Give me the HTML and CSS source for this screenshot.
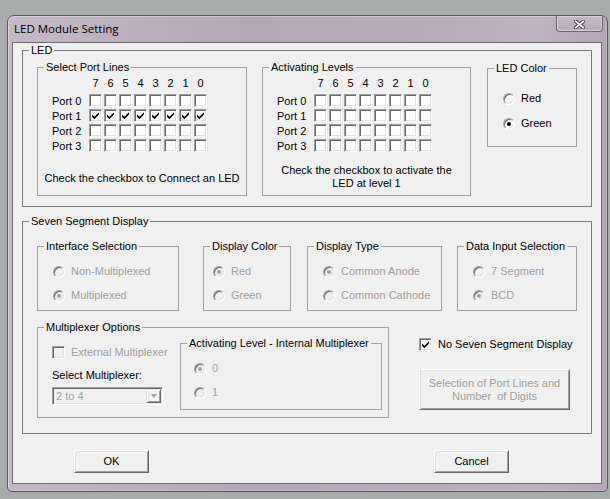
FILE: index.html
```html
<!DOCTYPE html>
<html>
<head>
<meta charset="utf-8">
<title>LED Module Setting</title>
<link rel="stylesheet" href="styles.css">
</head>
<body>
<svg class="defs" width="0" height="0" aria-hidden="true">
  <defs>
    <symbol id="tick" viewBox="0 0 7 7"><path d="M0 2.4 L2.4 4.8 L7 0.2 L7 2.6 L2.4 7.2 L0 4.8 Z"/></symbol>
  </defs>
</svg>
<div class="window">
  <div class="titlebar">
    <span class="title">LED Module Setting</span>
    <div class="close">
      <svg class="x" viewBox="0 0 11 9" width="11" height="9">
        <path class="x-out" d="M1.8 1.5 L9.2 7.5 M9.2 1.5 L1.8 7.5"/>
        <path class="x-in" d="M1.8 1.5 L9.2 7.5 M9.2 1.5 L1.8 7.5"/>
      </svg>
    </div>
  </div>
  <div class="client">
    <fieldset class="group outer led">
      <legend>LED</legend>
      <div class="led-row">
        <fieldset class="group ports">
          <legend>Select Port Lines</legend>
          <div class="matrix">
            <span></span><span class="bit">7</span><span class="bit">6</span><span class="bit">5</span><span class="bit">4</span><span class="bit">3</span><span class="bit">2</span><span class="bit">1</span><span class="bit">0</span>
            <span class="port">Port 0</span><i class="cb"></i><i class="cb"></i><i class="cb"></i><i class="cb"></i><i class="cb"></i><i class="cb"></i><i class="cb"></i><i class="cb"></i>
            <span class="port">Port 1</span><i class="cb"><svg class="tick"><use href="#tick"/></svg></i><i class="cb"><svg class="tick"><use href="#tick"/></svg></i><i class="cb"><svg class="tick"><use href="#tick"/></svg></i><i class="cb"><svg class="tick"><use href="#tick"/></svg></i><i class="cb"><svg class="tick"><use href="#tick"/></svg></i><i class="cb"><svg class="tick"><use href="#tick"/></svg></i><i class="cb"><svg class="tick"><use href="#tick"/></svg></i><i class="cb"><svg class="tick"><use href="#tick"/></svg></i>
            <span class="port">Port 2</span><i class="cb"></i><i class="cb"></i><i class="cb"></i><i class="cb"></i><i class="cb"></i><i class="cb"></i><i class="cb"></i><i class="cb"></i>
            <span class="port">Port 3</span><i class="cb"></i><i class="cb"></i><i class="cb"></i><i class="cb"></i><i class="cb"></i><i class="cb"></i><i class="cb"></i><i class="cb"></i>
          </div>
          <p class="note note-connect">Check the checkbox to Connect an LED</p>
        </fieldset>
        <fieldset class="group levels">
          <legend>Activating Levels</legend>
          <div class="matrix">
            <span></span><span class="bit">7</span><span class="bit">6</span><span class="bit">5</span><span class="bit">4</span><span class="bit">3</span><span class="bit">2</span><span class="bit">1</span><span class="bit">0</span>
            <span class="port">Port 0</span><i class="cb"></i><i class="cb"></i><i class="cb"></i><i class="cb"></i><i class="cb"></i><i class="cb"></i><i class="cb"></i><i class="cb"></i>
            <span class="port">Port 1</span><i class="cb"></i><i class="cb"></i><i class="cb"></i><i class="cb"></i><i class="cb"></i><i class="cb"></i><i class="cb"></i><i class="cb"></i>
            <span class="port">Port 2</span><i class="cb"></i><i class="cb"></i><i class="cb"></i><i class="cb"></i><i class="cb"></i><i class="cb"></i><i class="cb"></i><i class="cb"></i>
            <span class="port">Port 3</span><i class="cb"></i><i class="cb"></i><i class="cb"></i><i class="cb"></i><i class="cb"></i><i class="cb"></i><i class="cb"></i><i class="cb"></i>
          </div>
          <p class="note note-level">Check the checkbox to activate the<br>LED at level 1</p>
        </fieldset>
        <fieldset class="group ledcolor">
          <legend>LED Color</legend>
          <div class="opts opts-ledcolor">
            <div class="opt"><i class="rb"></i><span>Red</span></div>
            <div class="opt"><i class="rb on"></i><span>Green</span></div>
          </div>
        </fieldset>
      </div>
    </fieldset>

    <fieldset class="group outer seg">
      <legend>Seven Segment Display</legend>
      <div class="seg-row1">
        <fieldset class="group g-iface">
          <legend>Interface Selection</legend>
          <div class="opts opts-seg">
            <div class="opt dis"><i class="rb"></i><span>Non-Multiplexed</span></div>
            <div class="opt dis"><i class="rb on"></i><span>Multiplexed</span></div>
          </div>
        </fieldset>
        <fieldset class="group g-dcolor">
          <legend>Display Color</legend>
          <div class="opts opts-seg opts-narrow">
            <div class="opt dis"><i class="rb on"></i><span>Red</span></div>
            <div class="opt dis"><i class="rb"></i><span>Green</span></div>
          </div>
        </fieldset>
        <fieldset class="group g-dtype">
          <legend>Display Type</legend>
          <div class="opts opts-seg">
            <div class="opt dis"><i class="rb on"></i><span>Common Anode</span></div>
            <div class="opt dis"><i class="rb"></i><span>Common Cathode</span></div>
          </div>
        </fieldset>
        <fieldset class="group g-input">
          <legend>Data Input Selection</legend>
          <div class="opts opts-seg">
            <div class="opt dis"><i class="rb"></i><span>7 Segment</span></div>
            <div class="opt dis"><i class="rb on"></i><span>BCD</span></div>
          </div>
        </fieldset>
      </div>
      <div class="seg-row2">
        <fieldset class="group g-mux">
          <legend>Multiplexer Options</legend>
          <div class="mux-body">
            <div class="mux-left">
              <div class="opt dis"><i class="cb"></i><span>External Multiplexer</span></div>
              <div class="mux-label">Select Multiplexer:</div>
              <div class="combo">
                <span class="combo-text">2 to 4</span>
                <span class="combo-btn"><i class="arrow"></i></span>
              </div>
            </div>
            <fieldset class="group g-level">
              <legend>Activating Level - Internal Multiplexer</legend>
              <div class="opts opts-level">
                <div class="opt dis"><i class="rb on"></i><span>0</span></div>
                <div class="opt dis"><i class="rb"></i><span>1</span></div>
              </div>
            </fieldset>
          </div>
        </fieldset>
        <div class="seg-right">
          <div class="opt"><i class="cb"><svg class="tick"><use href="#tick"/></svg></i><span>No Seven Segment Display</span></div>
          <div class="btn btn-dis btn-sel">Selection of Port Lines and<br>Number&nbsp; of Digits</div>
        </div>
      </div>
    </fieldset>

    <div class="actions">
      <div class="btn btn-ok">OK</div>
      <div class="btn btn-cancel">Cancel</div>
    </div>
  </div>
</div>
</body>
</html>
```
FILE: styles.css
```css
* { box-sizing: border-box; }
html, body { margin: 0; padding: 0; }
body {
  width: 610px;
  height: 499px;
  overflow: hidden;
  background: #a9abaa;
  font-family: "Liberation Sans", Arial, sans-serif;
  font-size: 11px;
  line-height: 13px;
  color: #000;
}
.defs { display: block; width: 0; height: 0; overflow: hidden; }

/* window frame */
.window {
  margin: 15px 0 0 7px;
  width: 601px;
  height: 477px;
  border: 1px solid #5a5660;
  border-radius: 7px 7px 5px 5px;
  background:
    linear-gradient(90deg, rgba(255,255,255,0.22) 0%, rgba(255,255,255,0.12) 18%, rgba(255,255,255,0) 40%, rgba(255,255,255,0.05) 70%, rgba(255,255,255,0.14) 88%, rgba(255,255,255,0) 100%),
    #b3a6b6;
  box-shadow: inset 1px 1px 0 rgba(255,255,255,0.35), inset -1px -1px 0 rgba(255,255,255,0.2);
  display: flex;
  flex-direction: column;
}
.titlebar {
  height: 26px;
  display: flex;
  align-items: flex-start;
  flex: none;
}
.title {
  font-family: "Open Sans", "Noto Sans", sans-serif;
  font-size: 11.5px;
  line-height: 26px;
  padding-left: 6px;
  color: #000;
}
.close {
  margin-left: auto;
  margin-right: 4px;
  width: 47px;
  height: 16px;
  border: 1px solid #6d6372;
  border-top: none;
  border-radius: 0 0 4px 4px;
  background: linear-gradient(180deg, #c3b8c6 0%, #b9adbc 100%);
  box-shadow: inset 0 0 0 1px rgba(255,255,255,0.35);
  display: flex;
  align-items: center;
  justify-content: center;
}
.x { display: block; margin-top: 1px; }
.x-out { stroke: #3f3a44; stroke-width: 3.6; fill: none; stroke-linecap: square; }
.x-in { stroke: #ffffff; stroke-width: 1.7; fill: none; stroke-linecap: square; }

/* client area */
.client {
  margin: 0 5px 0 4px;
  height: 442px;
  border: 1px solid #6e6e6e;
  background: #f0f0f0;
  display: flex;
  flex-direction: column;
}

/* group boxes */
.group {
  margin: 0;
  padding: 0;
  min-width: 0;
  border: 1px solid #a0a0a0;
  flex: none;
}
.group > legend {
  padding: 0 2px;
  margin-left: 6px;
  font-size: 11px;
  line-height: 13px;
}
.outer { border-color: #7c7c7c; }

.led { margin: 1px 0 0 9px; width: 570px; height: 163px; }
.led-row {
  display: flex;
  align-items: flex-start;
  padding: 4px 0 0 14px;
}
.ports { width: 210px; height: 135px; margin-right: 15px; }
.levels { width: 209px; height: 135px; margin-right: 16px; }
.ledcolor { width: 90px; height: 85px; margin-top: 1px; }

.matrix {
  display: grid;
  grid-template-columns: 35px repeat(8, 13px);
  grid-template-rows: 17px repeat(4, 15px);
  column-gap: 2px;
  padding: 3px 0 0 14px;
}
.bit { text-align: center; line-height: 13px; }
.port { line-height: 15px; white-space: nowrap; }

/* checkbox */
.cb {
  display: inline-flex;
  align-items: center;
  justify-content: center;
  width: 13px;
  height: 13px;
  border: 1px solid;
  border-color: #a0a0a0 #ffffff #ffffff #a0a0a0;
  box-shadow: inset 1px 1px 0 #696969, inset -1px -1px 0 #e3e3e3;
  background: #ffffff;
  flex: none;
}
.tick { width: 7px; height: 7px; fill: #000; display: block; }

.note { margin: 0; text-align: center; line-height: 13px; }
.note-connect { margin-top: 18px; }
.note-level { margin-top: 10px; }

/* radio options */
.opts { display: flex; flex-direction: column; }
.opt {
  display: flex;
  align-items: center;
  height: 13px;
  white-space: nowrap;
}
.opt > .rb, .opt > .cb { margin-right: 6px; }
.rb {
  display: inline-flex;
  align-items: center;
  justify-content: center;
  width: 12px;
  height: 12px;
  border-radius: 50%;
  border: 1px solid;
  border-color: #a0a0a0 #ffffff #ffffff #a0a0a0;
  box-shadow: inset 1px 1px 0 #696969, inset -1px -1px 0 #e3e3e3;
  background: #ffffff;
  flex: none;
}
.rb.on::after {
  content: "";
  width: 4px;
  height: 4px;
  border-radius: 50%;
  background: #000;
}
.opt.dis { color: #a0a0a0; }
.opt.dis .rb, .opt.dis .cb { background: #f0f0f0; }
.opt.dis .rb.on::after { background: #a0a0a0; }

.opts-ledcolor { padding: 17px 0 0 15px; gap: 12px; }

/* seven segment */
.seg { margin: 8px 0 0 9px; width: 570px; height: 219px; }
.seg-row1 {
  display: flex;
  align-items: flex-start;
  padding: 12px 0 0 14px;
}
.g-iface { width: 142px; height: 71px; margin-right: 24px; }
.g-dcolor { width: 88px; height: 71px; margin-right: 16px; }
.g-dtype { width: 135px; height: 71px; margin-right: 15px; }
.g-input { width: 120px; height: 71px; }
.opts-seg { padding: 12px 0 0 15px; gap: 11px; }
.opts-narrow { padding-left: 9px; }

.seg-row2 {
  display: flex;
  align-items: flex-start;
  padding: 10px 0 0 14px;
}
.g-mux { width: 352px; height: 97px; }
.mux-body { display: flex; align-items: flex-start; }
.mux-left {
  width: 125px;
  padding-left: 14px;
  display: flex;
  flex-direction: column;
}
.mux-left .opt { margin-top: 12px; }
.mux-label { margin-top: 10px; line-height: 13px; white-space: nowrap; }
.combo {
  margin-top: 5px;
  width: 111px;
  height: 18px;
  border: 1px solid;
  border-color: #a0a0a0 #ffffff #ffffff #a0a0a0;
  box-shadow: inset 1px 1px 0 #696969, inset -1px -1px 0 #e3e3e3;
  background: #f0f0f0;
  display: flex;
  align-items: stretch;
  padding: 1px;
}
.combo-text {
  flex: 1;
  color: #a0a0a0;
  line-height: 14px;
  padding-left: 2px;
}
.combo-btn {
  width: 15px;
  border: 1px solid;
  border-color: #e3e3e3 #696969 #696969 #e3e3e3;
  box-shadow: inset 1px 1px 0 #ffffff, inset -1px -1px 0 #a0a0a0;
  background: #f0f0f0;
  display: flex;
  align-items: center;
  justify-content: center;
}
.arrow {
  width: 0;
  height: 0;
  border-left: 3.5px solid transparent;
  border-right: 3.5px solid transparent;
  border-top: 4px solid #a0a0a0;
  filter: drop-shadow(1px 1px 0 #ffffff);
}
.g-level { width: 202px; height: 73px; margin: 3px 0 0 17px; }
.opts-level { padding: 12px 0 0 13px; gap: 11px; }

.seg-right {
  margin-left: 30px;
  display: flex;
  flex-direction: column;
  align-items: flex-start;
}
.seg-right .opt { margin-top: 17px; }

/* buttons */
.btn {
  display: flex;
  align-items: center;
  justify-content: center;
  text-align: center;
  border: 1px solid;
  border-color: #ffffff #696969 #696969 #ffffff;
  box-shadow: inset 1px 1px 0 #e3e3e3, inset -1px -1px 0 #a0a0a0;
  background: #f0f0f0;
  line-height: 13px;
}
.btn-dis { color: #a0a0a0; }
.btn-sel { margin-top: 18px; width: 151px; height: 41px; }
.actions {
  display: flex;
  margin-top: 16px;
  padding-left: 61px;
}
.btn-ok, .btn-cancel { width: 75px; height: 23px; }
.btn-cancel { margin-left: 285px; }
```
